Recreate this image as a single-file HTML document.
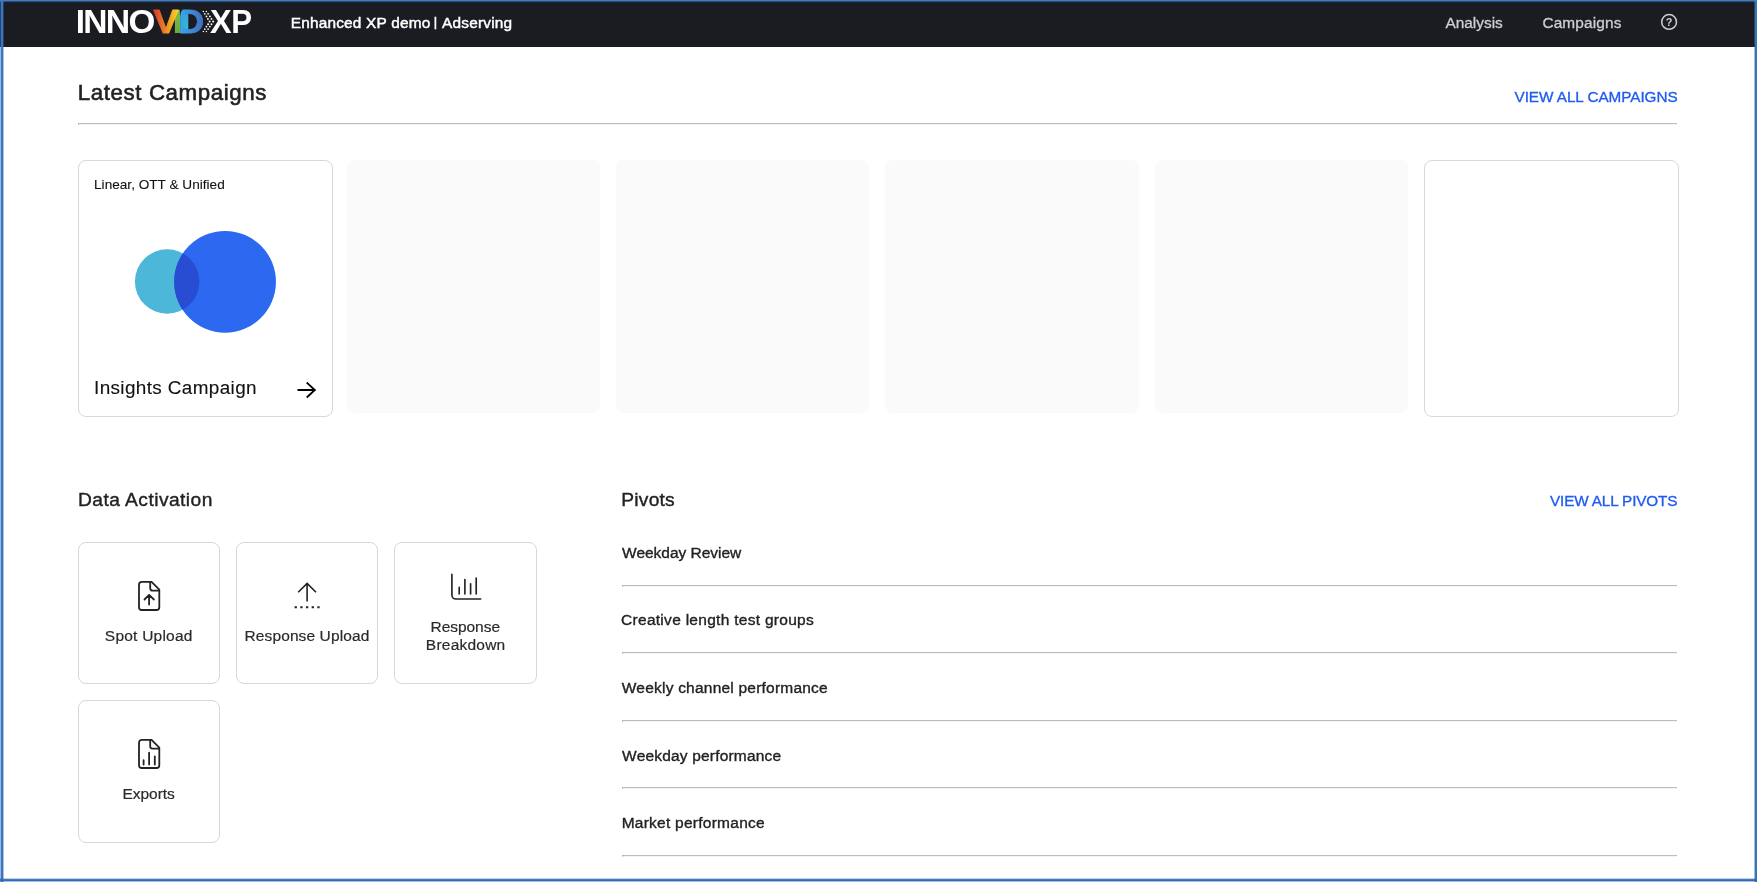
<!DOCTYPE html>
<html lang="en">
<head>
<meta charset="utf-8">
<title>Innovid XP - Enhanced XP demo | Adserving</title>
<style>
*{box-sizing:border-box;margin:0;padding:0}
html,body{width:1757px;height:882px;overflow:hidden;background:#fff}
body{position:relative;will-change:transform;font-family:"Liberation Sans",sans-serif;color:#222}
.abs,.t{position:absolute}
.t{white-space:nowrap;display:block;text-decoration:none}
header{position:absolute;left:0;top:0;width:1757px;height:47px;background:#1b1c22}
.rule{position:absolute;height:2px;border-top:1px solid #bdbdbd;border-bottom:1px solid #f4f4f4;border-left:1px solid #a2a2a2}
.card{position:absolute;border:1px solid #d8d8d8;border-radius:8px;background:#fff}
.ph{position:absolute;border-radius:8px;background:#fafafa}
.tile{position:absolute;width:142px;height:142px;border:1px solid #d8d8d8;border-radius:8px;background:#fff}
svg{position:absolute;overflow:visible}
.ico{fill:none;stroke:#222;stroke-width:1.8;stroke-linecap:round;stroke-linejoin:round}
/* frame */
.fr{position:absolute;z-index:10}
.pipe{font-size:12.9px;vertical-align:1.7px;line-height:0;-webkit-text-stroke-width:0.55px;letter-spacing:0;margin-left:-1.4px;margin-right:1.4px}
#ttl{left:290.68px;top:13.80px;font-size:15.4px;line-height:18px;letter-spacing:0.204px;color:#fff;font-weight:400;-webkit-text-stroke-width:0.45px}
#nav1{left:1445.40px;top:13.85px;font-size:15.4px;line-height:18px;letter-spacing:0.015px;color:#cfcfd1;font-weight:400;-webkit-text-stroke-width:0.3px}
#nav2{left:1542.42px;top:13.85px;font-size:15.4px;line-height:18px;letter-spacing:0.138px;color:#cfcfd1;font-weight:400;-webkit-text-stroke-width:0.3px}
#h1{left:77.84px;top:78.95px;font-size:22.3px;line-height:27px;letter-spacing:0.595px;color:#222;font-weight:400;-webkit-text-stroke-width:0.6px}
#va1{left:1514.54px;top:87.85px;font-size:15.3px;line-height:18px;letter-spacing:-0.056px;color:#1f5cf0;font-weight:400;-webkit-text-stroke-width:0.33px}
#c1a{left:94.06px;top:176.95px;font-size:13.6px;line-height:16px;letter-spacing:0.010px;color:#111;font-weight:400;-webkit-text-stroke-width:0.1px}
#c1b{left:94.00px;top:375.95px;font-size:18.9px;line-height:23px;letter-spacing:0.383px;color:#111;font-weight:400;-webkit-text-stroke-width:0.12px}
#h2{left:78.00px;top:487.85px;font-size:19.2px;line-height:23px;letter-spacing:0.456px;color:#222;font-weight:400;-webkit-text-stroke-width:0.4px}
#h3{left:621.35px;top:487.90px;font-size:19.2px;line-height:23px;letter-spacing:0.219px;color:#222;font-weight:400;-webkit-text-stroke-width:0.4px}
#va2{left:1550.00px;top:491.95px;font-size:15.3px;line-height:18px;letter-spacing:-0.147px;color:#1f5cf0;font-weight:400;-webkit-text-stroke-width:0.33px}
#d1{left:104.86px;top:625.95px;font-size:15.5px;line-height:19px;letter-spacing:0.224px;color:#2a2a2a;font-weight:400;-webkit-text-stroke-width:0.2px}
#d2{left:244.54px;top:625.95px;font-size:15.5px;line-height:19px;letter-spacing:0.108px;color:#2a2a2a;font-weight:400;-webkit-text-stroke-width:0.2px}
#d3a{left:430.51px;top:617.00px;font-size:15.5px;line-height:19px;letter-spacing:-0.037px;color:#2a2a2a;font-weight:400;-webkit-text-stroke-width:0.2px}
#d3b{left:425.86px;top:634.95px;font-size:15.5px;line-height:19px;letter-spacing:0.223px;color:#2a2a2a;font-weight:400;-webkit-text-stroke-width:0.2px}
#d4{left:122.40px;top:783.95px;font-size:15.5px;line-height:19px;letter-spacing:-0.022px;color:#2a2a2a;font-weight:400;-webkit-text-stroke-width:0.2px}
#p1{left:622.10px;top:542.95px;font-size:15.5px;line-height:19px;letter-spacing:-0.027px;color:#222;font-weight:400;-webkit-text-stroke-width:0.36px}
#p2{left:621.05px;top:609.95px;font-size:15.5px;line-height:19px;letter-spacing:0.285px;color:#222;font-weight:400;-webkit-text-stroke-width:0.36px}
#p3{left:621.80px;top:677.90px;font-size:15.5px;line-height:19px;letter-spacing:0.217px;color:#222;font-weight:400;-webkit-text-stroke-width:0.36px}
#p4{left:622.10px;top:745.95px;font-size:15.5px;line-height:19px;letter-spacing:0.186px;color:#222;font-weight:400;-webkit-text-stroke-width:0.36px}
#p5{left:621.63px;top:812.85px;font-size:15.5px;line-height:19px;letter-spacing:0.254px;color:#222;font-weight:400;-webkit-text-stroke-width:0.36px}
</style>
</head>
<body>
<header>
  <svg id="logo" width="300" height="47" viewBox="0 0 300 47" style="left:0;top:0" role="img" aria-label="INNOVID XP">
    <defs>
      <linearGradient id="gv" x1="0" y1="0" x2="1" y2="0">
        <stop offset="0" stop-color="#d3352b"/><stop offset="0.3" stop-color="#e5662a"/><stop offset="0.55" stop-color="#f09424"/><stop offset="0.8" stop-color="#f5b927"/><stop offset="1" stop-color="#f8dc2e"/>
      </linearGradient>
      <linearGradient id="gi" x1="0" y1="0" x2="0" y2="1">
        <stop offset="0" stop-color="#8cc04a"/><stop offset="1" stop-color="#5fa640"/>
      </linearGradient>
      <linearGradient id="gd" x1="0" y1="0" x2="1" y2="0">
        <stop offset="0" stop-color="#36aee0"/><stop offset="0.3" stop-color="#3b97e0"/><stop offset="0.65" stop-color="#3f80d2"/><stop offset="1" stop-color="#416cc0"/>
      </linearGradient>
      <linearGradient id="gc" x1="0" y1="0" x2="0" y2="1">
        <stop offset="0" stop-color="#3aa0e0"/><stop offset="1" stop-color="#35b8d8"/>
      </linearGradient>
    </defs>
    <g font-family="Liberation Sans, sans-serif" font-weight="700" font-size="100">
      <text transform="translate(75.77 32.70) scale(0.3332 0.3299)" fill="#fff">I</text>
      <text transform="translate(83.36 32.70) scale(0.3351 0.3299)" fill="#fff">N</text>
      <text transform="translate(105.84 32.70) scale(0.3385 0.3299)" fill="#fff">N</text>
      <text transform="translate(128.58 32.68) scale(0.3454 0.3291)" fill="#fff">O</text>
      <text transform="translate(172.39 32.90) scale(0.3610 0.3270)" fill="url(#gi)">I</text>
      <text transform="translate(153.34 33.00) scale(0.3796 0.3270)" fill="url(#gv)" stroke="url(#gv)" stroke-width="2.4" stroke-linejoin="round">V</text>
      <text transform="translate(178.20 33.00) scale(0.3587 0.3270)" fill="url(#gd)" stroke="url(#gd)" stroke-width="2.4" stroke-linejoin="round">D</text>
      <text transform="translate(209.91 32.80) scale(0.3249 0.3299)" fill="#fff">X</text>
      <text transform="translate(231.21 32.80) scale(0.3128 0.3299)" fill="#fff">P</text>
    </g>
    <path d="M179.9 9.2H183.4C181.6 10.2 180.6 12 180.3 15.2H179.9Z" fill="#1b1c22"/>
    <path d="M188.3 14H186C181.2 16.2 181.2 26.8 186 29H188.3Z" fill="url(#gc)"/>
    <g fill="#fff"><circle cx="203.3" cy="11.4" r="0.75"/><circle cx="206.4" cy="11.4" r="0.75"/><circle cx="204.8" cy="13.8" r="0.85"/><circle cx="208.1" cy="13.8" r="0.85"/><circle cx="206.5" cy="16.4" r="0.9"/><circle cx="209.9" cy="16.4" r="0.9"/><circle cx="207.9" cy="18.9" r="0.95"/><circle cx="211.5" cy="18.9" r="0.95"/><circle cx="209.6" cy="21.5" r="1.0"/><circle cx="213.2" cy="21.5" r="1.0"/><circle cx="208.1" cy="24.2" r="0.95"/><circle cx="211.5" cy="24.2" r="0.95"/><circle cx="206.4" cy="26.6" r="0.9"/><circle cx="209.8" cy="26.6" r="0.9"/><circle cx="204.8" cy="29.1" r="0.85"/><circle cx="208.1" cy="29.1" r="0.85"/><circle cx="203.3" cy="31.5" r="0.75"/><circle cx="206.4" cy="31.5" r="0.75"/></g>
  </svg>
  <span class="t" id="ttl">Enhanced XP demo <span class="pipe">|</span> Adserving</span>
  <nav>
    <a class="t" id="nav1">Analysis</a>
    <a class="t" id="nav2">Campaigns</a>
    <svg id="help" width="20" height="20" viewBox="0 0 20 20" style="left:1659px;top:12px">
      <circle cx="10.1" cy="9.9" r="7.4" fill="none" stroke="#cfcfd1" stroke-width="1.5"/>
      <text x="10.1" y="14" text-anchor="middle" font-family="Liberation Sans, sans-serif" font-weight="700" font-size="10.8" fill="#cfcfd1">?</text>
    </svg>
  </nav>
</header>

<main>
  <section id="campaigns">
    <h1 class="t" id="h1">Latest Campaigns</h1>
    <a class="t" id="va1">VIEW ALL CAMPAIGNS</a>
    <div class="rule" style="left:78px;top:123px;width:1599px"></div>

    <article class="card" style="left:78px;top:160px;width:255px;height:257px">
      <svg width="160" height="110" viewBox="128 226 160 110" style="left:49px;top:65px" aria-hidden="true">
        <defs><clipPath id="cpb"><circle cx="225.05" cy="281.8" r="50.9"/></clipPath></defs>
        <circle cx="167.15" cy="281.55" r="32.25" fill="#4db7d9"/>
        <circle cx="225.05" cy="281.8" r="50.9" fill="#2c69f0"/>
        <circle cx="167.15" cy="281.55" r="32.25" fill="#284dd2" clip-path="url(#cpb)"/>
      </svg>
    </article>
    <span class="t" id="c1a">Linear, OTT &amp; Unified</span>
    <span class="t" id="c1b">Insights Campaign</span>
    <div class="ph" style="left:347px;top:160px;width:253px;height:253px"></div>
    <div class="ph" style="left:616px;top:160px;width:253px;height:253px"></div>
    <div class="ph" style="left:885px;top:160px;width:254px;height:253px"></div>
    <div class="ph" style="left:1155px;top:160px;width:253px;height:253px"></div>
    <article class="card" style="left:1424px;top:160px;width:255px;height:257px"></article>
  </section>

  <section id="activation">
    <h2 class="t" id="h2">Data Activation</h2>
    <div class="tile" style="left:78px;top:542px"></div>
    <div class="tile" style="left:236px;top:542px"></div>
    <div class="tile" style="left:394px;top:542px;width:143px"></div>
    <div class="tile" style="left:78px;top:700px;height:143px"></div>
    <span class="t" id="d1">Spot Upload</span>
    <span class="t" id="d2">Response Upload</span>
    <span class="t" id="d3a">Response</span>
    <span class="t" id="d3b">Breakdown</span>
    <span class="t" id="d4">Exports</span>
  </section>

  <section id="pivots">
    <h2 class="t" id="h3">Pivots</h2>
    <a class="t" id="va2">VIEW ALL PIVOTS</a>
    <span class="t" id="p1">Weekday Review</span>
    <div class="rule" style="left:622px;top:585px;width:1055px"></div>
    <span class="t" id="p2">Creative length test groups</span>
    <div class="rule" style="left:622px;top:652px;width:1055px"></div>
    <span class="t" id="p3">Weekly channel performance</span>
    <div class="rule" style="left:622px;top:720px;width:1055px"></div>
    <span class="t" id="p4">Weekday performance</span>
    <div class="rule" style="left:622px;top:787px;width:1055px"></div>
    <span class="t" id="p5">Market performance</span>
    <div class="rule" style="left:622px;top:855px;width:1055px"></div>
  </section>

    <svg id="icons" width="1757" height="882" viewBox="0 0 1757 882" style="left:0;top:0" aria-hidden="true">
      <g class="ico">
        <!-- spot upload: file + arrow -->
        <path d="M151.6 581.9H141.8a2.8 2.8 0 0 0-2.8 2.8V607.2a2.8 2.8 0 0 0 2.8 2.8H156.5a2.8 2.8 0 0 0 2.8-2.8V589.6Z"/>
        <path d="M150.2 582.2V588.3a2.4 2.4 0 0 0 2.4 2.4H159"/>
        <path d="M149.1 604.6V595M144.5 599.5L149.1 594.9L153.9 599.5"/>
        <!-- response upload: arrow + dots -->
        <path d="M307.1 601.6V583.8M298.2 592.3L307.1 583.4L316 592.3" stroke-width="1.6" stroke-linecap="butt" stroke-linejoin="miter"/>
        <path d="M294.6 607.2H319.6" stroke-width="2" stroke-linecap="butt" stroke-dasharray="2.3 3.38"/>
        <!-- response breakdown: axis + bars -->
        <path d="M451.9 574.4V595a4 4 0 0 0 4 4H480.7" stroke-width="1.65"/>
        <path d="M459.2 594V587.4M464.9 594V579.6M470.6 594V583.8M476.2 594V578" stroke-width="1.65"/>
        <!-- exports: file + bars -->
        <path d="M151.6 739.9H141.8a2.8 2.8 0 0 0-2.8 2.8V765.2a2.8 2.8 0 0 0 2.8 2.8H156.5a2.8 2.8 0 0 0 2.8-2.8V747.6Z"/>
        <path d="M150.2 740.2V746.3a2.4 2.4 0 0 0 2.4 2.4H159"/>
        <path d="M143.6 764.5V760.2M149.1 764.5V752.7M154.8 764.5V756.5"/>
      </g>
      <!-- card arrow -->
      <path d="M298.4 390H314.6M307.4 383.1L314.8 390L307.4 396.9" fill="none" stroke="#000" stroke-width="1.8" stroke-linecap="square" stroke-linejoin="miter"/>
    </svg>
</main>

<div class="fr" style="left:0;top:0;width:4px;height:882px;background:linear-gradient(to right,rgba(52,110,186,.47) 0 1px,#3a75c0 1px 3px,rgba(52,110,186,.42) 3px 4px)"></div>
<div class="fr" style="left:1754px;top:0;width:3px;height:882px;background:linear-gradient(to right,rgba(52,110,186,.45) 0 1px,#3a73b9 1px 3px)"></div>
<div class="fr" style="left:0;top:0;width:1757px;height:3px;background:linear-gradient(to bottom,#3f7dc6 0 1px,rgba(63,125,198,.5) 1px 2px,rgba(63,125,198,.06) 2px 3px)"></div>
<div class="fr" style="left:0;top:878px;width:1757px;height:4px;background:linear-gradient(to bottom,rgba(49,107,180,.3) 0 1px,rgba(49,107,180,.9) 1px 2px,#316bb4 2px 3px,rgba(49,107,180,.42) 3px 4px)"></div>
</body>
</html>
